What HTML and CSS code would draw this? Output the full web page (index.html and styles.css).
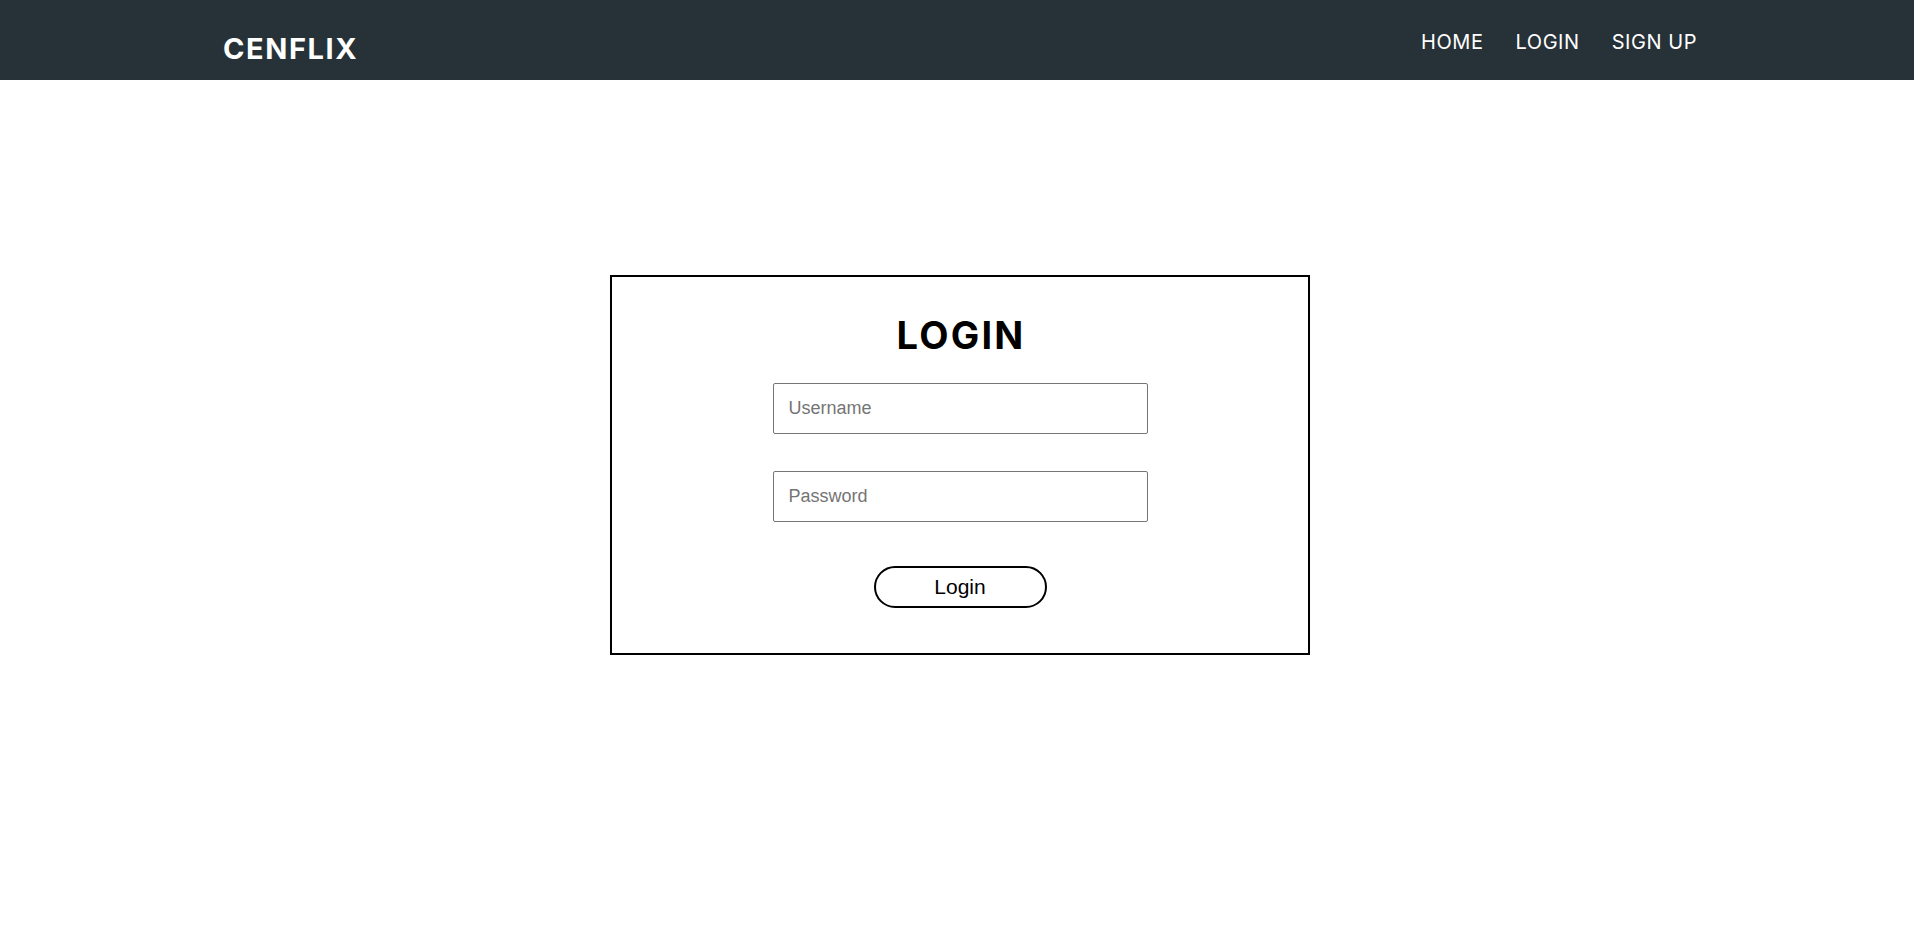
FILE: index.html
```html
<!DOCTYPE html>
<html lang="en">
<head>
<meta charset="utf-8">
<title>Cenflix - Login</title>
<link rel="stylesheet" href="styles.css">
</head>
<body>
<header class="topbar">
  <a class="brand" href="#">CENFLIX</a>
  <nav class="nav">
    <a class="nav-link" href="#">HOME</a>
    <a class="nav-link" href="#">LOGIN</a>
    <a class="nav-link" href="#">SIGN UP</a>
  </nav>
</header>
<main class="main">
  <form class="card">
    <h1 class="card-title">LOGIN</h1>
    <input class="field" type="text" placeholder="Username">
    <input class="field field-gap" type="password" placeholder="Password">
    <button class="btn" type="button">Login</button>
  </form>
</main>
</body>
</html>
```
FILE: styles.css
```css
html, body {
  margin: 0;
  padding: 0;
  background: #ffffff;
}

body {
  font-family: "Inter", "Liberation Sans", sans-serif;
}

.topbar {
  height: 80px;
  background: #263238;
  display: flex;
  justify-content: space-between;
  align-items: flex-start;
  padding: 0 217px 0 223px;
  box-sizing: border-box;
}

.brand {
  margin-top: 34px;
  font-size: 29px;
  line-height: 1;
  font-weight: 700;
  color: #ffffff;
  text-decoration: none;
  letter-spacing: 1.6px;
}

.nav {
  display: flex;
  gap: 32px;
  margin-top: 32px;
}

.nav-link {
  font-size: 20px;
  line-height: 1;
  font-weight: 400;
  color: #ffffff;
  text-decoration: none;
  letter-spacing: 0.55px;
}

.main {
  padding-left: 6px;
  display: flex;
  justify-content: center;
}

.card {
  width: 700px;
  box-sizing: border-box;
  margin-top: 195px;
  border: 2px solid #000000;
  padding: 39px 0 45px;
  display: flex;
  flex-direction: column;
  align-items: center;
}

.card-title {
  margin: 0 0 29px;
  padding-left: 2px;
  font-size: 38px;
  line-height: 1;
  font-weight: 700;
  color: #000000;
  letter-spacing: 2.2px;
}

.field {
  width: 375px;
  height: 51px;
  box-sizing: border-box;
  border: 1px solid #767676;
  border-radius: 2px;
  padding: 0 15px;
  font-family: "Liberation Sans", Arial, sans-serif;
  font-size: 18px;
  color: #000000;
  background: #ffffff;
  outline: none;
}

.field::placeholder {
  color: #757575;
}

.field-gap {
  margin-top: 37px;
}

.btn {
  margin-top: 44px;
  width: 173px;
  height: 42px;
  box-sizing: border-box;
  border: 2px solid #000000;
  border-radius: 21px;
  background: #ffffff;
  font-family: "Liberation Sans", Arial, sans-serif;
  font-size: 21px;
  color: #000000;
  padding: 0;
  cursor: pointer;
}
```
